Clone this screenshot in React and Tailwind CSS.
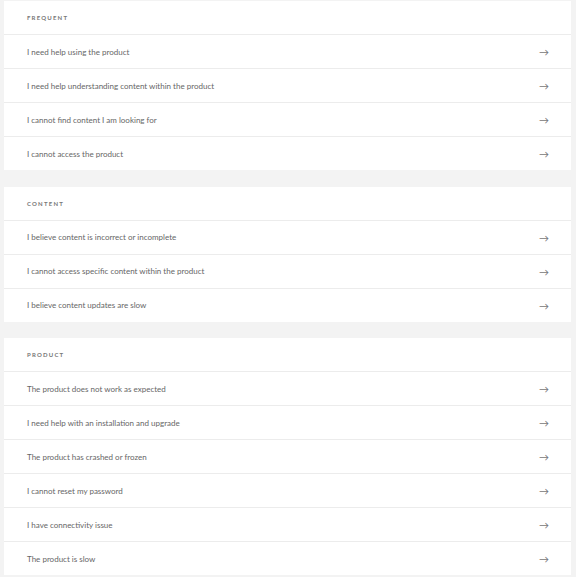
const sections = [
  {
    title: "FREQUENT",
    items: [
      "I need help using the product",
      "I need help understanding content within the product",
      "I cannot find content I am looking for",
      "I cannot access the product",
    ],
  },
  {
    title: "CONTENT",
    items: [
      "I believe content is incorrect or incomplete",
      "I cannot access specific content within the product",
      "I believe content updates are slow",
    ],
  },
  {
    title: "PRODUCT",
    items: [
      "The product does not work as expected",
      "I need help with an installation and upgrade",
      "The product has crashed or frozen",
      "I cannot reset my password",
      "I have connectivity issue",
      "The product is slow",
    ],
  },
];

export default function App() {
  return (
    <div
      className="min-h-[577px] bg-[#f3f3f3] pt-px pl-1 pr-[5px] flex flex-col gap-[16.5px]"
      style={{ fontFamily: "Lato, 'Noto Sans', sans-serif" }}
    >
      {sections.map((section) => (
        <section key={section.title} className="bg-white">
          <div className="h-[33px] flex items-center pl-[23px] text-[6px] font-bold tracking-[0.2em] text-[#777]">
            {section.title}
          </div>
          {section.items.map((item) => (
            <div
              key={item}
              className="h-[34px] border-t border-[#ececec] flex items-center justify-between pl-[23px] pr-[22px] text-[8px] text-[#666]"
            >
              <span>{item}</span>
              <span className="text-[10px] text-[#777] translate-y-px">→</span>
            </div>
          ))}
        </section>
      ))}
    </div>
  );
}
